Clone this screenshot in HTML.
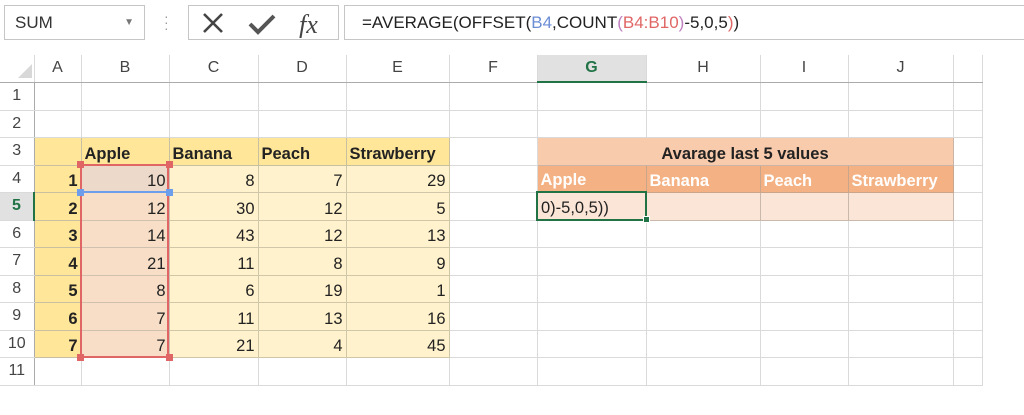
<!DOCTYPE html>
<html><head><style>
body{margin:0;width:1024px;height:415px;background:#fff;position:relative;overflow:hidden;font-family:"Liberation Sans",sans-serif;}
.abs{position:absolute}
table{position:absolute;left:0;top:55px;border-collapse:collapse;table-layout:fixed;font-size:16.5px;color:#222}
td{border:1px solid #dadada;padding:0 3px 1px;height:26px;white-space:nowrap;overflow:hidden;box-sizing:border-box;vertical-align:bottom;line-height:20px}
tr.h td{background:#fff;text-align:center;color:#444;border-bottom:1px solid #ababab;font-size:16px;vertical-align:middle;border-top:none}
td.rh{text-align:center;color:#444;background:#fff;border-right:1px solid #ababab;padding:0;border-left:none;vertical-align:middle;font-size:16px}
.y{background:#FFE699;font-weight:bold;border-color:#c8c0a0}
.l{background:#FFF2CC;text-align:right;border-color:#cfc7a8}
.b{background:#F8DEC6;text-align:right;border-color:#d0c0b0}
.n{text-align:right}
.t{background:#F8CBAD;font-weight:bold;text-align:center;border-color:#c9b4a5}
.s{background:#F4B183;color:#fff;font-weight:bold;border-color:#c9a58c}
.p{background:#FBE5D6;border-color:#c9b9ad}
.hd{width:7px;height:7px;position:absolute;background:#e06666}
</style></head><body>
<div class="abs" style="left:4px;top:5px;width:141px;height:35px;border:1px solid #c6c6c6;box-sizing:border-box;font-size:17px;color:#333;line-height:33px;padding-left:10px">SUM<span style="position:absolute;right:10px;top:0;font-size:10px;color:#777">▼</span></div>
<div class="abs" style="left:164px;top:13px;color:#999;font-size:14px;line-height:6px">·<br>·<br>·</div>
<div class="abs" style="left:188px;top:5px;width:151px;height:35px;border:1px solid #c6c6c6;box-sizing:border-box"></div>
<svg class="abs" style="left:195px;top:8px" width="140" height="30"><path d="M9 6L27 24M27 6L9 24" stroke="#444" stroke-width="2.6" fill="none"/><path d="M55 16L63 24L79 8" stroke="#555" stroke-width="4" fill="none"/><text x="104" y="25" font-family="Liberation Serif" font-style="italic" font-size="26" fill="#444">fx</text></svg>
<div class="abs" style="left:344px;top:5px;width:690px;height:35px;border:1px solid #c6c6c6;box-sizing:border-box;font-size:17px;color:#222;line-height:33px;padding-left:17px">=AVERAGE(OFFSET(<span style="color:#6b8dd6">B4</span>,COUNT<span style="color:#c080c0">(</span><span style="color:#e06666">B4:B10</span><span style="color:#c080c0">)</span>-5,0,5<span style="color:#e06666">)</span>)</div>
<table>
<colgroup><col style="width:34px"><col style="width:47px"><col style="width:88px"><col style="width:89px"><col style="width:88px"><col style="width:103px"><col style="width:88px"><col style="width:109px"><col style="width:114px"><col style="width:88px"><col style="width:105px"><col style="width:29px"></colgroup>
<tr class="h" style="height:27px"><td style="border-left:none"></td><td>A</td><td>B</td><td>C</td><td>D</td><td>E</td><td>F</td><td style="background:#e1e1e1;color:#217346;font-weight:bold;border-bottom:2px solid #217346">G</td><td>H</td><td>I</td><td>J</td><td></td></tr>
<tr style="height:28px"><td class="rh">1</td><td></td><td></td><td></td><td></td><td></td><td></td><td></td><td></td><td></td><td></td><td></td></tr>
<tr style="height:27px"><td class="rh">2</td><td></td><td></td><td></td><td></td><td></td><td></td><td></td><td></td><td></td><td></td><td></td></tr>
<tr style="height:28px"><td class="rh">3</td><td class="y"></td><td class="y">Apple</td><td class="y">Banana</td><td class="y">Peach</td><td class="y">Strawberry</td><td></td><td class="t" colspan="4">Avarage last 5 values</td><td></td></tr>
<tr style="height:27px"><td class="rh">4</td><td class="y n">1</td><td class="b" style="background:#EDD9C9">10</td><td class="l">8</td><td class="l">7</td><td class="l">29</td><td></td><td class="s">Apple</td><td class="s">Banana</td><td class="s">Peach</td><td class="s">Strawberry</td><td></td></tr>
<tr style="height:28px"><td class="rh" style="background:#e1e1e1;color:#217346;font-weight:bold;border-right:2px solid #217346">5</td><td class="y n">2</td><td class="b">12</td><td class="l">30</td><td class="l">12</td><td class="l">5</td><td></td><td class="p" style="border:2px solid #217346">0)-5,0,5))</td><td class="p"></td><td class="p"></td><td class="p"></td><td></td></tr>
<tr style="height:27px"><td class="rh">6</td><td class="y n">3</td><td class="b">14</td><td class="l">43</td><td class="l">12</td><td class="l">13</td><td></td><td></td><td></td><td></td><td></td><td></td></tr>
<tr style="height:28px"><td class="rh">7</td><td class="y n">4</td><td class="b">21</td><td class="l">11</td><td class="l">8</td><td class="l">9</td><td></td><td></td><td></td><td></td><td></td><td></td></tr>
<tr style="height:27px"><td class="rh">8</td><td class="y n">5</td><td class="b">8</td><td class="l">6</td><td class="l">19</td><td class="l">1</td><td></td><td></td><td></td><td></td><td></td><td></td></tr>
<tr style="height:28px"><td class="rh">9</td><td class="y n">6</td><td class="b">7</td><td class="l">11</td><td class="l">13</td><td class="l">16</td><td></td><td></td><td></td><td></td><td></td><td></td></tr>
<tr style="height:27px"><td class="rh">10</td><td class="y n">7</td><td class="b">7</td><td class="l">21</td><td class="l">4</td><td class="l">45</td><td></td><td></td><td></td><td></td><td></td><td></td></tr>
<tr style="height:28px"><td class="rh">11</td><td></td><td></td><td></td><td></td><td></td><td></td><td></td><td></td><td></td><td></td><td></td></tr>
</table>
<svg class="abs" style="left:18px;top:64px" width="14" height="14"><path d="M14 0L14 14L0 14Z" fill="#d8d8d8"/></svg>
<div class="abs" style="left:80px;top:164px;width:89px;height:194px;border:2px solid #e06666;box-sizing:border-box"></div>
<div class="abs" style="left:81px;top:191px;width:88px;height:2px;background:#6d9eeb"></div>
<div class="hd" style="left:77px;top:161px"></div><div class="hd" style="left:166px;top:161px"></div>
<div class="hd" style="left:77px;top:189px;background:#6d9eeb"></div><div class="hd" style="left:166px;top:189px;background:#6d9eeb"></div>
<div class="hd" style="left:77px;top:354px"></div><div class="hd" style="left:166px;top:354px"></div>
<div class="abs" style="left:643px;top:216px;width:5px;height:5px;background:#217346;border:1px solid #fff"></div>
</body></html>
